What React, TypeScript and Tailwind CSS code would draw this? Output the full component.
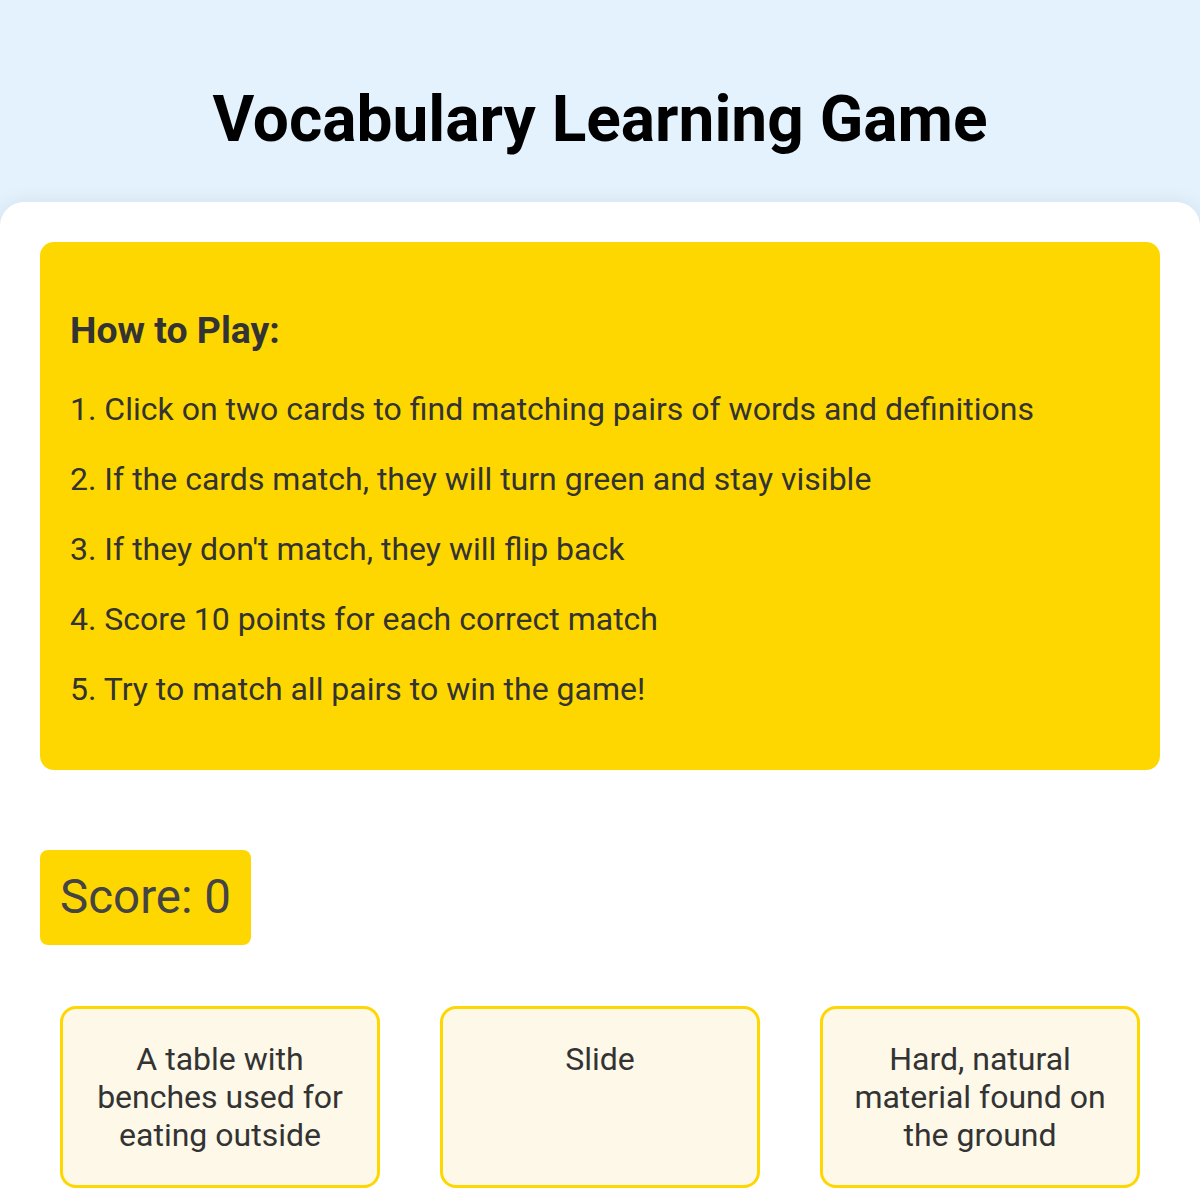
const steps = [
  'Click on two cards to find matching pairs of words and definitions',
  'If the cards match, they will turn green and stay visible',
  "If they don't match, they will flip back",
  'Score 10 points for each correct match',
  'Try to match all pairs to win the game!',
];

const cards = [
  'A table with benches used for eating outside',
  'Slide',
  'Hard, natural material found on the ground',
];

export default function App() {
  return (
    <div className="min-h-screen bg-[#e3f2fd] font-['Roboto',sans-serif] text-[#333]">
      <h1 className="pt-[88px] pb-[50px] text-center text-[64px] leading-[64px] font-bold text-black">
        Vocabulary Learning Game
      </h1>

      <div className="rounded-t-[24px] bg-white p-[40px] shadow-[0_0_20px_rgba(0,0,0,0.08)]">
        <div className="rounded-[14px] bg-[#ffd700] px-[30px] pt-[68px] pb-[60px]">
          <h3 className="text-[37.4px] leading-[40px] font-bold">How to Play:</h3>
          <ol className="mt-[38px] flex flex-col gap-[28px]">
            {steps.map((s, i) => (
              <li key={i} className="text-[32px] leading-[42px]">
                {i + 1}. {s}
              </li>
            ))}
          </ol>
        </div>

        <div className="mt-[80px] inline-block rounded-[8px] bg-[#ffd700] px-[20px] py-[19px] text-[47.5px] leading-[57px] text-[#444]">
          Score: 0
        </div>

        <div className="mx-[20px] mt-[61px] grid grid-cols-3 gap-[60px]">
          {cards.map((c) => (
            <div
              key={c}
              className="h-[182px] rounded-[16px] border-[3px] border-[#ffd700] bg-[#fdf8e8] px-[30px] pt-[31px] text-center text-[32px] leading-[38px]"
            >
              {c}
            </div>
          ))}
        </div>
      </div>
    </div>
  );
}
